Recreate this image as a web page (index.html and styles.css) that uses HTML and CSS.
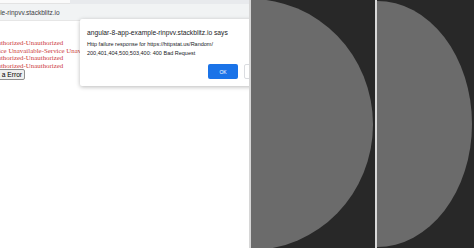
FILE: index.html
```html
<!DOCTYPE html>
<html lang="en">
<head>
  <meta charset="UTF-8">
  <title>Alert preview</title>
  <link rel="stylesheet" href="styles.css">
</head>
<body>

  <div class="browser">
    <div class="tabstrip">
      <div class="tab"></div>
    </div>
    <div class="toolbar">
      <span class="url">angular-8-app-example-rinpvv.stackblitz.io</span>
    </div>

    <div class="page">
      <div class="content">
        <div class="msg">Unauthorized-Unauthorized</div>
        <div class="msg">Service Unavailable-Service Unavailable</div>
        <div class="msg">Unauthorized-Unauthorized</div>
        <div class="msg">Unauthorized-Unauthorized</div>
        <button class="btn-error">Get a Error</button>
      </div>

      <div class="dialog">
        <div class="dialog-title">angular-8-app-example-rinpvv.stackblitz.io says</div>
        <div class="dialog-text">
          Http failure response for https://httpstat.us/Random/<br>
          200,401,404,500,503,400: 400 Bad Request
        </div>
        <div class="dialog-actions">
          <button class="btn-ok">OK</button>
          <button class="btn-cancel">Cancel</button>
        </div>
      </div>
    </div>
  </div>

  <div class="divider"></div>

  <div class="viewer">
    <div class="panel panel-wide">
      <div class="half-disc"></div>
    </div>
    <div class="panel-gap"></div>
    <div class="panel panel-narrow">
      <div class="half-disc"></div>
    </div>
    <div class="edge"></div>
  </div>

</body>
</html>
```

FILE: styles.css
```css
:root {
  --toolbar-bg: #f1f3f4;
  --dark-bg: #282828;
  --disc: #6b6b6b;
  --error-red: #cc3b3b;
  --blue: #1a73e8;
}

html, body {
  margin: 0;
  height: 100%;
}

body {
  display: flex;
  height: 248px;
  overflow: hidden;
  background: #fff;
  font-family: "Liberation Sans", Arial, sans-serif;
}

/* left: the browser window */
.browser {
  width: 249px;
  flex-shrink: 0;
  display: flex;
  flex-direction: column;
  overflow: hidden;
}

.tabstrip {
  height: 4px;
  background: #e8eaed;
  display: flex;
}

.tab {
  width: 70px;
  background: #fafafa;
  border-bottom: 1px solid #e3e3e3;
}

.toolbar {
  height: 16px;
  background: var(--toolbar-bg);
  border-bottom: 1px solid #e6e6e6;
  display: flex;
  align-items: center;
  overflow: hidden;
}

.url {
  white-space: nowrap;
  font-size: 6.5px;
  color: #3c4043;
  margin-left: -62px;
}

.page {
  position: relative;
  flex: 1;
  background: #fff;
}

.content {
  margin-left: -14px;
  padding-top: 18px;
}

.msg {
  font-family: "Liberation Serif", "Times New Roman", serif;
  font-size: 6.9px;
  line-height: 7.7px;
  color: var(--error-red);
  white-space: nowrap;
}

.btn-error {
  display: block;
  margin-top: -1px;
  font-family: "Liberation Sans", Arial, sans-serif;
  font-size: 6.7px;
  line-height: 7px;
  padding: 1px 2px;
  background: #efefef;
  border: 1px solid #8f8f8f;
  border-radius: 2px;
  color: #000;
}

/* alert() box, drawn over the page */
.dialog {
  position: absolute;
  left: 80px;
  top: -2px;
  width: 175px;
  height: 67px;
  background: #fff;
  border-radius: 2px;
  box-shadow: 0 1px 4px rgba(0, 0, 0, 0.28);
  padding: 9px 0 0 7px;
  box-sizing: border-box;
  color: #202124;
}

.dialog-title {
  font-size: 6.7px;
  line-height: 9px;
  white-space: nowrap;
}

.dialog-text {
  margin-top: 3px;
  font-size: 5.5px;
  line-height: 9px;
  white-space: nowrap;
}

.dialog-actions {
  display: flex;
  gap: 6px;
  margin-top: 6px;
  padding-left: 121px;
}

.dialog-actions button {
  flex-shrink: 0;
  height: 15px;
  width: 30px;
  font-size: 5px;
  border-radius: 2px;
  padding: 0;
  font-family: "Liberation Sans", Arial, sans-serif;
}

.btn-ok {
  background: var(--blue);
  border: none;
  color: #fff;
}

.btn-cancel {
  background: #fff;
  border: 1px solid #dadce0;
  color: var(--blue);
}

.divider {
  width: 2px;
  flex-shrink: 0;
  background: #d6d6d6;
}

/* right: two dark preview panels */
.viewer {
  flex: 1;
  display: flex;
  background: var(--dark-bg);
}

.panel {
  position: relative;
  overflow: hidden;
  display: flex;
  align-items: center;
}

.panel-wide {
  width: 124px;
}

.panel-narrow {
  width: 96px;
}

.panel-gap {
  width: 2px;
  background: #d9d9d9;
}

.half-disc {
  flex-shrink: 0;
  background: var(--disc);
  border-radius: 0 100% 100% 0 / 0 50% 50% 0;
}

.panel-wide .half-disc {
  width: 122px;
  height: 251px;
}

.panel-narrow .half-disc {
  width: 95px;
  height: 246px;
}

.edge {
  flex: 1;
}
```
